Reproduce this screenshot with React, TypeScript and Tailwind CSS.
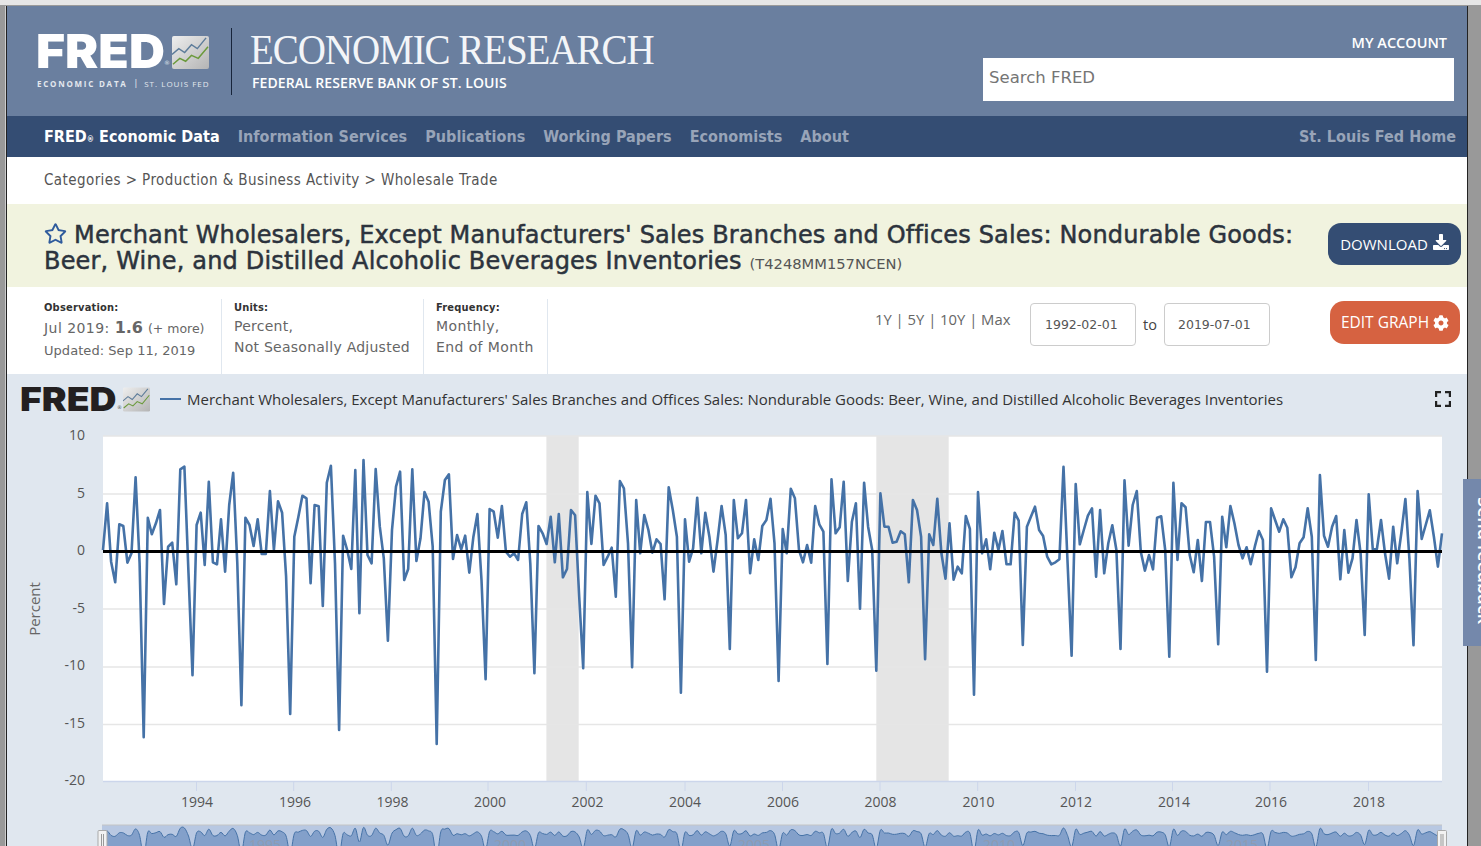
import { FaCog, FaDownload, FaRegStar } from "react-icons/fa";

// series read off the graph, in page-zoom rows (y = 430 + row / 3)
const rows = [
  360, 220, 395, 457, 283, 288, 398, 370, 142, 400, 922, 263, 313, 280, 240, 522, 350, 338, 463, 118, 110, 430, 736, 285,
  248, 405, 155, 397, 403, 268, 425, 225, 128, 400, 826, 263, 285, 348, 268, 372, 372, 183, 360, 214, 248, 440, 852, 320,
  260, 197, 205, 460, 225, 229, 528, 158, 107, 400, 900, 317, 360, 417, 120, 550, 90, 375, 400, 117, 290, 385, 632, 300,
  170, 125, 450, 417, 118, 393, 325, 186, 215, 350, 942, 245, 150, 133, 387, 315, 358, 317, 428, 320, 252, 450, 748, 237,
  245, 323, 228, 365, 380, 370, 390, 252, 217, 400, 730, 288, 310, 342, 260, 397, 252, 442, 417, 240, 256, 500, 715, 186,
  342, 197, 220, 405, 380, 353, 500, 153, 175, 340, 712, 210, 370, 255, 300, 368, 328, 342, 508, 172, 240, 320, 788, 268,
  395, 355, 203, 370, 248, 320, 425, 330, 228, 315, 657, 210, 325, 310, 210, 430, 328, 390, 288, 270, 206, 340, 753, 297,
  370, 176, 205, 360, 397, 345, 398, 228, 283, 305, 702, 148, 310, 292, 155, 453, 275, 220, 536, 158, 290, 360, 722, 190,
  290, 290, 338, 335, 304, 313, 457, 210, 240, 320, 688, 313, 345, 206, 370, 446, 280, 449, 410, 430, 258, 297, 794, 186,
  370, 328, 418, 308, 360, 303, 403, 403, 248, 272, 645, 290, 260, 230, 300, 318, 380, 403, 397, 388, 110, 400, 677, 162,
  343, 300, 257, 235, 440, 240, 430, 340, 286, 360, 657, 151, 347, 225, 183, 365, 422, 375, 418, 263, 259, 360, 680, 158,
  390, 220, 232, 375, 427, 330, 453, 276, 276, 380, 643, 260, 352, 228, 280, 345, 385, 352, 403, 350, 303, 330, 725, 235,
  270, 305, 268, 293, 442, 412, 340, 322, 235, 320, 690, 135, 317, 350, 290, 258, 448, 300, 428, 385, 270, 370, 615, 193,
  358, 357, 270, 370, 446, 290, 400, 310, 207, 385, 646, 183, 327, 285, 241, 320, 410, 310,
];

const px = (i: number) => 103 + i * (1339 / 329);
const line = rows.map((r, i) => `${px(i).toFixed(1)},${(430 + r / 3).toFixed(1)}`).join(" ");

// overview strip: flatter than the main series, only the deep drops leave the strip
function overviewPath() {
  const pts: [number, number][] = [];
  for (let i = 0; i < rows.length; i++) {
    const v = (364 - rows[i]) / 34.5;
    const y = v < -5 ? 835 - v * 1.3 : v < 0 ? 835 - v * 0.5 : 835 - v * 0.95;
    pts.push([px(i), y]);
  }
  let d = `M${pts[0][0]},${pts[0][1]}`;
  for (let i = 0; i < pts.length - 1; i++) {
    const p0 = pts[Math.max(i - 1, 0)];
    const p1 = pts[i];
    const p2 = pts[i + 1];
    const p3 = pts[Math.min(i + 2, pts.length - 1)];
    d += `C${(p1[0] + (p2[0] - p0[0]) / 6).toFixed(1)},${(p1[1] + (p2[1] - p0[1]) / 6).toFixed(1)} ${(p2[0] - (p3[0] - p1[0]) / 6).toFixed(1)},${(p2[1] - (p3[1] - p1[1]) / 6).toFixed(1)} ${p2[0].toFixed(1)},${p2[1].toFixed(1)}`;
  }
  return d;
}
const overview = overviewPath();

const yTicks = [
  { label: "10", base: 440 },
  { label: "5", base: 498 },
  { label: "0", base: 555 },
  { label: "-5", base: 613 },
  { label: "-10", base: 670 },
  { label: "-15", base: 728 },
  { label: "-20", base: 785 },
];
const grid = [436, 494, 609, 667, 724.5];
const xTicks = [
  { label: "1994", x: 196.5, tx: 197 },
  { label: "1996", x: 293.7, tx: 295 },
  { label: "1998", x: 391.3, tx: 392.5 },
  { label: "2000", x: 488, tx: 490 },
  { label: "2002", x: 586.3, tx: 587.5 },
  { label: "2004", x: 685, tx: 685 },
  { label: "2006", x: 782.5, tx: 783 },
  { label: "2008", x: 880, tx: 880.5 },
  { label: "2010", x: 977.7, tx: 978.5 },
  { label: "2012", x: 1075.5, tx: 1076 },
  { label: "2014", x: 1172.5, tx: 1174 },
  { label: "2016", x: 1270, tx: 1271 },
  { label: "2018", x: 1368.5, tx: 1369 },
];
const navLabels = [
  { label: "1995", x: 265 },
  { label: "2000", x: 510 },
  { label: "2005", x: 754 },
  { label: "2010", x: 999 },
  { label: "2015", x: 1242 },
];

const LogoMark = ({ className }: { className: string }) => (
  <svg viewBox="0 0 38 34" className={className}>
    <defs>
      <linearGradient id="markfill" x1="0" y1="0" x2="1" y2="1">
        <stop offset="0" stopColor="#eeeeee" />
        <stop offset="1" stopColor="#b4b4b4" />
      </linearGradient>
    </defs>
    <rect width="38" height="34" rx="2" fill="url(#markfill)" />
    <path d="M0 19 L7 13 L13 17 L20 9 L26 13 L35 2" fill="none" stroke="#5d7c9a" strokeWidth="1.5" />
    <path d="M1 29 L8 23 L14 26 L20 20 L27 23 L37 11" fill="none" stroke="#6b9a3c" strokeWidth="1.5" />
  </svg>
);

const Handle = ({ x }: { x: number }) => (
  <g>
    <rect x={x} y="830.5" width="9" height="20" rx="1" fill="#f2f2f2" stroke="#a9a9a9" />
    <path d={`M${x + 3.5} 834V846M${x + 5.5} 834V846`} stroke="#999" />
  </g>
);

export default function App() {
  return (
    <div className="relative flex h-[846px] w-[1481px] flex-col overflow-hidden bg-[#999999] font-['DejaVu_Sans',sans-serif]">
      <div className="h-[5px] shrink-0 bg-[#e6e6e6]" />
      <div className="h-px shrink-0 bg-[#9a9a9a]" />
      <div className="flex min-h-0 flex-1">
        <div className="w-[5px] shrink-0 bg-[#999999]" />
        <div className="w-px shrink-0 bg-[#cccccc]" />
        <div className="w-px shrink-0 bg-[#222222]" />
        <main className="flex w-[1460px] shrink-0 flex-col bg-white">
          <header className="flex h-[110px] shrink-0 bg-[#6a7f9f]">
            <div className="flex w-[224px] shrink-0 flex-col pl-[29px] pt-[24px]">
              <div className="flex h-[41px] items-start">
                <span className="block w-[128px] origin-left scale-x-[1.06] font-['Inter',sans-serif] text-[47px] leading-[42px] font-black tracking-[0px] text-white">
                  FRED
                </span>
                <span className="mt-[29px] w-[8px] text-[6px] leading-[8px] text-[#dfe4ec]">®</span>
                <LogoMark className="mt-[5px] h-[35px] w-[37px]" />
              </div>
              <div className="mt-[8px] flex items-center pl-[1px] text-[8px] leading-[10px] text-[#e3e7ee]">
                <span className="font-['Open_Sans',sans-serif] font-bold tracking-[1.75px]">ECONOMIC DATA</span>
                <span className="mx-[7px]">|</span>
                <span className="font-['Open_Sans',sans-serif] tracking-[1px]">ST. LOUIS FED</span>
              </div>
            </div>
            <div className="mt-[22px] h-[67px] w-px shrink-0 bg-[#17243a]" />
            <div className="flex w-[740px] shrink-0 flex-col pl-[18px] pt-[21px]">
              <span className="block origin-left scale-x-[0.929] whitespace-nowrap font-['Liberation_Serif',serif] text-[42px] leading-[46px] tracking-[-1.15px] text-[#f3f5f8]">
                ECONOMIC RESEARCH
              </span>
              <span className="pl-[2px] font-['Open_Sans',sans-serif] text-[14px] leading-[20px] font-semibold tracking-[0.07px] text-white">
                FEDERAL RESERVE BANK OF ST. LOUIS
              </span>
            </div>
            <div className="flex flex-1 flex-col items-end pr-[13px] pt-[28px]">
              <span className="pr-[7px] font-['Open_Sans',sans-serif] text-[14.5px] leading-[18px] font-semibold text-white">
                MY ACCOUNT
              </span>
              <div className="mt-[6px] flex h-[43px] w-[471px] items-center bg-white pb-[3px] pl-[6px] text-[16.5px] text-[#757575]">
                Search FRED
              </div>
            </div>
          </header>
          <nav className="flex h-[41px] shrink-0 items-center gap-[18px] bg-[#344d73] pl-[37px] pr-[11px] pt-[1px] text-[16px] font-bold tracking-[0.03px] text-[#98a4b8] [font-stretch:condensed]">
            <span className="text-white">
              FRED<span className="text-[8px]">®</span> Economic Data
            </span>
            <span>Information Services</span>
            <span>Publications</span>
            <span>Working Papers</span>
            <span>Economists</span>
            <span>About</span>
            <span className="ml-auto">St. Louis Fed Home</span>
          </nav>
          <div className="flex h-[47px] shrink-0 items-center pl-[37px] text-[15px] tracking-[0.42px] text-[#555555] [font-stretch:condensed]">
            Categories &gt; Production &amp; Business Activity &gt; Wholesale Trade
          </div>
          <section className="flex h-[83px] shrink-0 items-center justify-between bg-[#f1f3df] pl-[37px] pr-[6px]">
            <h1 className="w-[1262px] pt-[8px] text-[24px] leading-[26px] font-normal tracking-[0.17px] text-[#2c333d] [-webkit-text-stroke:0.5px]">
              <FaRegStar className="mr-[7px] inline-block h-[23px] w-[23px] align-[-2px] text-[#2f5b9c]" />
              Merchant Wholesalers, Except Manufacturers' Sales Branches and Offices Sales: Nondurable Goods: Beer, Wine,
              and Distilled Alcoholic Beverages Inventories{" "}
              <span className="text-[14.7px] tracking-[0px] text-[#555555] [-webkit-text-stroke:0px]">(T4248MM157NCEN)</span>
            </h1>
            <div className="mb-[3px] flex h-[42px] w-[133px] items-center justify-center gap-[5px] rounded-[13px] bg-[#344d73] font-['Open_Sans',sans-serif] text-[15px] text-white">
              DOWNLOAD
              <FaDownload className="-mt-[4px] h-[16px] w-[16px]" />
            </div>
          </section>
          <section className="flex h-[87px] shrink-0 items-start text-[14px] text-[#666666]">
            <div className="mt-[12px] h-[75px] w-[215px] shrink-0 border-r border-[#e0e7ef] pl-[37px] pt-[1px]">
              <div className="text-[11px] leading-[16px] font-bold tracking-[0.2px] text-[#333333] [font-stretch:condensed]">Observation:</div>
              <div className="mt-[1px] leading-[22px] tracking-[0.45px]">
                Jul 2019: <span className="text-[16px] font-bold tracking-[0px]">1.6</span>{" "}
                <span className="text-[12.5px] tracking-[0px]">(+ more)</span>
              </div>
              <div className="leading-[22px] text-[13px] tracking-[0.05px]">Updated: Sep 11, 2019</div>
            </div>
            <div className="mt-[12px] h-[75px] w-[202px] shrink-0 border-r border-[#e0e7ef] pl-[12px] pt-[1px]">
              <div className="text-[11px] leading-[15px] font-bold tracking-[0.2px] text-[#333333] [font-stretch:condensed]">Units:</div>
              <div className="leading-[22px] tracking-[0.25px]">Percent,</div>
              <div className="leading-[21px] tracking-[0.25px]">Not Seasonally Adjusted</div>
            </div>
            <div className="mt-[12px] h-[75px] w-[124px] shrink-0 border-r border-[#e0e7ef] pl-[12px] pt-[1px]">
              <div className="text-[11px] leading-[15px] font-bold tracking-[0.2px] text-[#333333] [font-stretch:condensed]">Frequency:</div>
              <div className="leading-[22px] tracking-[0.4px]">Monthly,</div>
              <div className="leading-[21px] tracking-[0.4px]">End of Month</div>
            </div>
            <div className="ml-[327px] mt-[22px] w-[155px] shrink-0 font-['Open_Sans',sans-serif] text-[14.8px] leading-[20px]">
              1Y | 5Y | 10Y | Max
            </div>
            <div className="mt-[16px] flex h-[43px] w-[106px] shrink-0 items-center rounded-[4px] border border-[#cccccc] pl-[14px] pt-[2px] text-[12.5px] text-[#555555]">
              1992-02-01
            </div>
            <div className="mt-[16px] flex h-[43px] w-[28px] shrink-0 items-center justify-center font-['Open_Sans',sans-serif] text-[14.5px] text-[#444444]">
              to
            </div>
            <div className="mt-[16px] flex h-[43px] w-[106px] shrink-0 items-center rounded-[4px] border border-[#cccccc] pl-[13px] pt-[2px] text-[12.5px] text-[#555555]">
              2019-07-01
            </div>
            <div className="ml-[60px] mt-[14px] flex h-[43px] w-[130px] shrink-0 items-center justify-center gap-[4px] rounded-[14px] bg-[#d66241] font-['Open_Sans',sans-serif] text-[15.5px] text-white">
              EDIT GRAPH
              <FaCog className="h-[16px] w-[16px]" />
            </div>
          </section>
          <section className="flex min-h-0 flex-1 flex-col bg-[#e0e7ef]">
            <div className="flex h-[50px] shrink-0 items-center pl-[13px] pr-[16px]">
              <span className="block w-[97px] origin-left scale-x-[1.13] font-['Inter',sans-serif] text-[33px] leading-[30px] font-black text-[#231f20]">
                FRED
              </span>
              <span className="mt-[16px] w-[6px] text-[5px] leading-[6px] text-[#555555]">®</span>
              <LogoMark className="h-[25px] w-[27px]" />
              <span className="ml-[10px] h-[2px] w-[21px] bg-[#4572a7]" />
              <span className="ml-[6px] pt-[1px] font-['Open_Sans',sans-serif] text-[15px] text-[#333333]">
                Merchant Wholesalers, Except Manufacturers' Sales Branches and Offices Sales: Nondurable Goods: Beer, Wine,
                and Distilled Alcoholic Beverages Inventories
              </span>
              <svg viewBox="0 0 16 16" className="ml-auto h-[16px] w-[16px]" fill="none" stroke="#222222" strokeWidth="2.4">
                <path d="M1 6V1H6M10 1H15V6M15 10V15H10M6 15H1V10" />
              </svg>
            </div>
            <svg viewBox="7 424 1460 422" className="h-[422px] w-[1460px] shrink-0 font-['Open_Sans',sans-serif]">
              <rect x="103" y="436" width="1339" height="345" fill="#ffffff" />
              <rect x="546.4" y="436" width="32.3" height="345" fill="#e5e5e5" />
              <rect x="876.3" y="436" width="72.4" height="345" fill="#e5e5e5" />
              {grid.map((y) => (
                <line key={y} x1="103" x2="1442" y1={y} y2={y} stroke="#e6e6e6" strokeWidth="1.5" />
              ))}
              <line x1="103" x2="1442" y1="781.5" y2="781.5" stroke="#ccd6eb" strokeWidth="1.5" />
              {xTicks.map((t) => (
                <g key={t.label}>
                  <line x1={t.x} x2={t.x} y1="781" y2="791" stroke="#ccd6eb" />
                  <text x={t.tx} y="807" textAnchor="middle" fontSize="14" fill="#555555">
                    {t.label}
                  </text>
                </g>
              ))}
              {yTicks.map((t) => (
                <text key={t.label} x="85" y={t.base} textAnchor="end" fontSize="14" fill="#555555">
                  {t.label}
                </text>
              ))}
              <text x="0" y="0" transform="translate(40 609) rotate(-90)" textAnchor="middle" fontSize="15" fill="#666666">
                Percent
              </text>
              <polyline points={line} fill="none" stroke="#4572a7" strokeWidth="2.6" strokeLinejoin="round" />
              <line x1="103" x2="1442" y1="551.5" y2="551.5" stroke="#000000" strokeWidth="3" />
              <rect x="102" y="825" width="1340" height="25" fill="#b8c8e2" />
              <line x1="102" x2="1442" y1="825" y2="825" stroke="#c4c4c4" />
              <path d={`${overview}L1442,860L103,860Z`} fill="#83a0ca" />
              <path d={overview} fill="none" stroke="#4572a7" strokeWidth="1" />
              {navLabels.map((t) => (
                <text key={t.label} x={t.x} y="850" textAnchor="middle" fontSize="14" fill="#8f9bb0">
                  {t.label}
                </text>
              ))}
              <Handle x={98} />
              <Handle x={1437.5} />
            </svg>
          </section>
        </main>
        <div className="w-px shrink-0 bg-[#222222]" />
      </div>
      <div className="absolute left-[1463px] top-[479px] flex h-[167px] w-[18px] justify-start overflow-hidden bg-[#7488ab]">
        <span className="ml-[11px] mt-[18px] whitespace-nowrap font-['Open_Sans',sans-serif] text-[18px] leading-[22px] font-semibold text-white [writing-mode:vertical-rl]">
          Send feedback
        </span>
      </div>
    </div>
  );
}
